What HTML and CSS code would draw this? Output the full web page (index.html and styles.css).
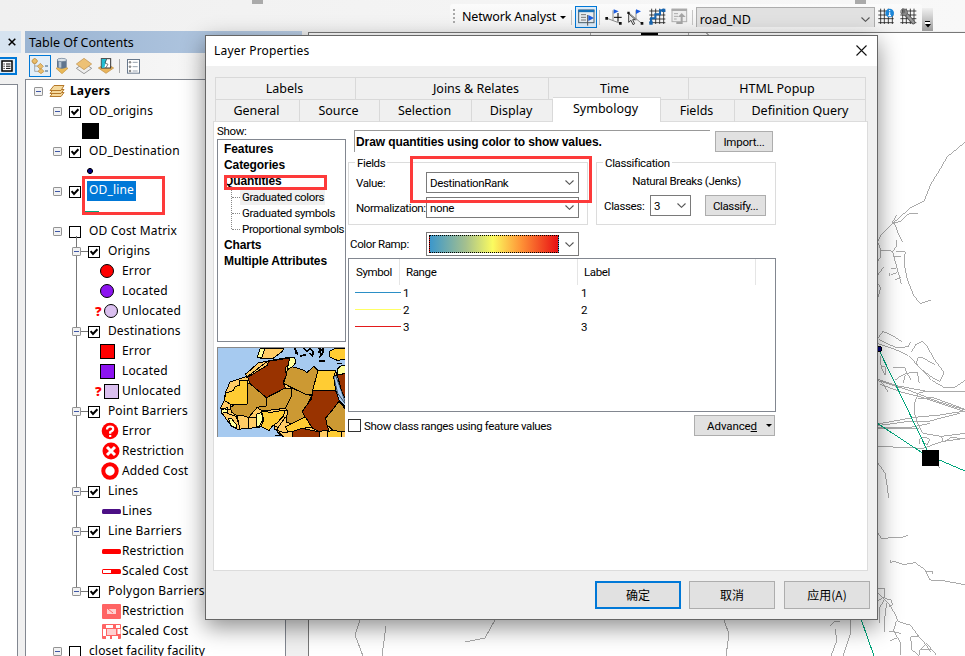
FILE: index.html
```
<!DOCTYPE html>
<html lang="en">
<head>
    <meta charset="UTF-8">
    <meta name="viewport" content="width=device-width, initial-scale=1.0">
    <title>Layer Properties</title>
    <link rel="stylesheet" href="styles.css">
</head>
<body>

    <!-- Shared symbols -->
    <svg class="defs" width="0" height="0">
        <symbol id="minus" viewBox="0 0 9 9">
            <rect x=".5" y=".5" width="8" height="8" rx=".6" fill="#f1f1f1" stroke="#929292"/>
            <path d="M2 4.5h5" stroke="#3f57a6"/>
        </symbol>
        <symbol id="box" viewBox="0 0 12 12">
            <rect x=".5" y=".5" width="11" height="11" fill="#fff" stroke="#000"/>
        </symbol>
        <symbol id="checked" viewBox="0 0 12 12">
            <rect x=".5" y=".5" width="11" height="11" fill="#fff" stroke="#000"/>
            <path d="M2.6 5.2L5 8L9.4 3.2" fill="none" stroke="#000" stroke-width="2"/>
        </symbol>
        <symbol id="chevron" viewBox="0 0 9 5">
            <path d="M.5 .5L4.5 4.3L8.500 .5" fill="none" stroke="#555" stroke-width="1.1"/>
        </symbol>
    </svg>

    <div class="app">
        <!-- Toolbar -->
        <div class="toolbar">
            <i class="stub stub-left"></i>
            <i class="stub stub-right"></i>
            <div class="network-bar">
                <span class="grip"></span>
                <span class="menu">Network Analyst</span>
                <span class="caret"></span>
                <span class="divider"></span>
                <span class="tool-active">
                    <svg width="18" height="18" viewBox="408 22 54 54">
                        <rect x="413" y="28" width="46" height="38" fill="#e9edf0" stroke="#4b5f6c" stroke-width="3"/>
                        <path d="M412 31h48" stroke="#1570b8" stroke-width="7"/>
                        <path d="M420 42h15M420 50h15M420 58h15" stroke="#777" stroke-width="3"/>
                        <path d="M440 43v32" stroke="#555" stroke-width="3"/>
                        <path d="M442 43l17 9l-17 9z" fill="#1c5de0"/>
                    </svg>
                </span>
                <span class="divider"></span>
                <svg class="tool" width="17" height="17" viewBox="494 25 51 51">
                    <path d="M500 56l40 15M518 32v30" fill="none" stroke="#777" stroke-width="2.500"/>
                    <path d="M520 29l15 6l-15 7z" fill="#1c5de0"/>
                    <path d="M533 40v26M521 53h23" stroke="#000" stroke-width="3"/>
                    <path d="M495 52h8v8h-8zM536 67h8v8h-8z" fill="#111"/>
                </svg>
                <svg class="tool" width="17" height="17" viewBox="560 25 51 51">
                    <path d="M565 39l40 33M587 32v30" fill="none" stroke="#777" stroke-width="2.500"/>
                    <path d="M587 29l15 6l-15 8z" fill="#1c5de0"/>
                    <path d="M565 42v26l7-6l6 13l5-3l-6-12h8z" fill="#eee" stroke="#222" stroke-width="2.500"/>
                    <path d="M561 36h7v7h-7zM601 67h8v8h-8z" fill="#111"/>
                </svg>
                <svg class="tool" width="17" height="17" viewBox="626 25 51 51">
                    <path d="M634 27v46M646 27v46M658 27v46M670 27v46M627 34h48M627 46h48M627 58h48M627 69h48" stroke="#222" stroke-width="2.500"/>
                    <path d="M632 70v-14h13v-12h14v-12h14" fill="none" stroke="#1765b0" stroke-width="6"/>
                    <path d="M627 65h10v10h-10zM665 27h10v10h-10z" fill="#1765b0"/>
                </svg>
                <svg class="tool" width="17" height="17" viewBox="692 25 51 51">
                    <rect x="695" y="28" width="44" height="38" fill="#eee" stroke="#b0b0b0" stroke-width="3"/>
                    <path d="M694 31h46" stroke="#aaa" stroke-width="6"/>
                    <path d="M701 42h12M701 50h12M701 58h8" stroke="#aaa" stroke-width="3"/>
                    <path d="M708 70h16v-20" fill="none" stroke="#a5a5a5" stroke-width="6"/>
                    <path d="M713 52l11-12l12 12z" fill="#a5a5a5"/>
                </svg>
                <span class="divider"></span>
                <div class="dataset">road_ND<svg width="9" height="5"><use href="#chevron"/></svg></div>
                <svg class="tool-end" width="17" height="17" viewBox="596 25 51 51">
                    <path d="M604 27v46M615 27v46M627 27v46M639 45v28M597 34h30M597 46h46M597 57h46M597 69h46" stroke="#222" stroke-width="2.500"/>
                    <circle cx="631" cy="40" r="13" fill="#1c86d8"/>
                    <path d="M631 31v4M631 38v10M627 48h8" stroke="#fff" stroke-width="3.500"/>
                </svg>
                <svg class="tool-end" width="17" height="17" viewBox="662 25 51 51">
                    <path d="M670 27v46M681 27v46M693 27v46M704 27v46M663 34h48M663 46h48M663 57h48M663 69h48" stroke="#222" stroke-width="2.500"/>
                    <path d="M675 38l27 30" stroke="#555" stroke-width="12" stroke-linecap="round"/>
                    <path d="M675 38l27 30" stroke="#999" stroke-width="7" stroke-linecap="round"/>
                    <path d="M666 31l8-1l2 8l-8 3l-4-4a13 13 0 0 0 18 10a13 13 0 0 0-2-18l-10-2z" fill="#888" stroke="#555" stroke-width="2"/>
                </svg>
            </div>
            <span class="overflow">
                <svg width="11" height="23" viewBox="0 0 11 23"><path d="M3 14.500h5" stroke="#fff" stroke-width="3"/><path d="M3 13.500h5" stroke="#000"/><path d="M3 16h6l-3 3.500z" fill="#000"/></svg>
            </span>
        </div>

        <div class="workspace">
            <!-- Docked strip -->
            <div class="dock">
                <div class="dock-title">
                    <svg width="8" height="8" viewBox="0 0 8 8"><path d="M.7 .7l6.600 6.600M7.300 .7L.7 7.300" stroke="#000" stroke-width="1.500"/></svg>
                </div>
                <div class="dock-button">
                    <svg width="12" height="12" viewBox="0 0 12 12"><rect x="1" y="1" width="10" height="10" fill="#fff" stroke="#000" stroke-width="1.500"/><path d="M2.500 4h1.200M5 4h4.500M2.500 6.200h1.200M5 6.200h4.500M2.500 8.400h1.200M5 8.400h4.500" stroke="#000"/></svg>
                </div>
                <div class="dock-list"></div>
            </div>

            <!-- Table of contents -->
            <div class="toc">
                <div class="toc-title">Table Of Contents</div>
                <div class="toc-tools">
                    <svg width="22" height="22" viewBox="87 165 66 66">
                        <rect x="88.500" y="166.500" width="63" height="63" fill="#e3eef8" stroke="#0078d7" stroke-width="3"/>
                        <path d="M104 184v30h14M104 198h16" fill="none" stroke="#888" stroke-width="2"/>
                        <g fill="#e9bd6c" stroke="#bb8a3d" stroke-width="2"><circle cx="104" cy="184" r="7"/><path d="M104 174l9 9l-9 9l-9-9zM121 190l9 9l-9 9l-9-9zM123 205l9 9l-9 7l-9-7z"/></g>
                        <path d="M135 198h9M135 213h9" stroke="#345d7d" stroke-width="3"/>
                    </svg>
                    <svg width="22" height="22" viewBox="153 165 66 66">
                        <path d="M168 205l18-8l18 8l-18 16z" fill="#e9b958" stroke="#c5923b" stroke-width="2"/>
                        <path d="M171 180v22q15 8 29 0v-22z" fill="#60758e"/>
                        <path d="M176 181v22h8v-22z" fill="#b7c5d2"/>
                        <ellipse cx="185.500" cy="180" rx="14.500" ry="5" fill="#dce4ea" stroke="#60758e" stroke-width="2"/>
                    </svg>
                    <svg width="22" height="22" viewBox="219 165 66 66">
                        <path d="M229 205l23-16l23 16l-23 16z" fill="#eee" stroke="#888" stroke-width="2.500"/>
                        <path d="M229 192l23-17l23 17l-23 17z" fill="#edc175" stroke="#bd8e48" stroke-width="2"/>
                    </svg>
                    <svg width="22" height="22" viewBox="285 165 66 66">
                        <path d="M295 204l23-14l23 14l-23 16z" fill="#e9b45c" stroke="#c08b3c" stroke-width="2"/>
                        <rect x="304" y="176" width="28" height="28" fill="#fff" stroke="#333" stroke-width="3"/>
                        <path d="M305 177h15l-7 26h-8z" fill="#22bdd2"/><path d="M320 177l-5 12l9 4l-7 11" fill="none" stroke="#333" stroke-width="2"/>
                    </svg>
                    <span class="toc-divider"></span>
                    <svg width="14" height="15" viewBox="381 176 42 45">
                        <rect x="382.500" y="177.500" width="36" height="41" fill="#fff" stroke="#69798c" stroke-width="3"/>
                        <path d="M398 186h15M398 199h15M398 212h15" stroke="#8491a0" stroke-width="2.500"/>
                        <g fill="none" stroke="#333" stroke-width="2"><circle cx="390" cy="186" r="2.500"/><circle cx="390" cy="199" r="2.500"/><circle cx="390" cy="212" r="2.500"/></g>
                    </svg>
                </div>

                <div class="tree">
                    <div class="row root">
                        <svg width="9" height="9"><use href="#minus"/></svg>
                        <svg class="stack" width="16" height="14" viewBox="0 0 16 14">
                            <g fill="#f5d99d" stroke="#b5792b"><path d="M1 12.500l3-4h11l-3 4z"/><path d="M1 9.500l3-4h11l-3 4z"/><path d="M1 6.500l4-5h10l-3 5z"/></g>
                        </svg>
                        <b>Layers</b>
                    </div>
                    <div class="row layer"><svg width="9" height="9"><use href="#minus"/></svg><svg width="12" height="12"><use href="#checked"/></svg><span>OD_origins</span></div>
                    <div class="row layer-symbol"><i class="black-square"></i></div>
                    <div class="row layer"><svg width="9" height="9"><use href="#minus"/></svg><svg width="12" height="12"><use href="#checked"/></svg><span>OD_Destination</span></div>
                    <div class="row layer-symbol"><svg class="point" width="6" height="6" viewBox="0 0 6 6"><path d="M2 0h2l2 2v2L4 6H2L0 4V2z" fill="#000"/><path d="M2 1h2l1 1v2L4 5H2L1 4V2z" fill="#00007c"/></svg></div>
                    <div class="row layer"><svg width="9" height="9"><use href="#minus"/></svg><svg width="12" height="12"><use href="#checked"/></svg><span class="selected">OD_line</span></div>
                    <div class="row layer-symbol"><i class="green-line"></i></div>
                    <div class="row layer"><svg width="9" height="9"><use href="#minus"/></svg><svg width="12" height="12"><use href="#box"/></svg><span>OD Cost Matrix</span></div>

                    <div class="group">
                        <div class="row sub"><svg width="9" height="9"><use href="#minus"/></svg><i class="branch"></i><svg width="12" height="12"><use href="#checked"/></svg><span>Origins</span></div>
                        <div class="row item"><svg width="22" height="18"><circle cx="7" cy="9" r="6.500" fill="#f00" stroke="#000"/></svg><span>Error</span></div>
                        <div class="row item"><svg width="22" height="18"><circle cx="7" cy="9" r="6.500" fill="#8c14f0" stroke="#000"/></svg><span>Located</span></div>
                        <div class="row item unlocated"><em>?</em><svg width="16" height="18"><circle cx="8" cy="9" r="6.500" fill="#dabfef" stroke="#000"/></svg><span>Unlocated</span></div>
                        <div class="row sub"><svg width="9" height="9"><use href="#minus"/></svg><i class="branch"></i><svg width="12" height="12"><use href="#checked"/></svg><span>Destinations</span></div>
                        <div class="row item"><svg width="22" height="18"><rect x=".5" y="2.500" width="14" height="14" fill="#f00" stroke="#000"/></svg><span>Error</span></div>
                        <div class="row item"><svg width="22" height="18"><rect x=".5" y="2.500" width="14" height="14" fill="#8c14f0" stroke="#000"/></svg><span>Located</span></div>
                        <div class="row item unlocated"><em>?</em><svg width="16" height="18"><rect x="1.500" y="2.500" width="14" height="14" fill="#dabfef" stroke="#000"/></svg><span>Unlocated</span></div>
                        <div class="row sub"><svg width="9" height="9"><use href="#minus"/></svg><i class="branch"></i><svg width="12" height="12"><use href="#checked"/></svg><span>Point Barriers</span></div>
                        <div class="row item"><svg width="22" height="18"><circle cx="10" cy="9" r="8.300" fill="#f00"/><path d="M7 7.500q0-3 3.200-3t3 2.600q0 1.700-3 3v1.700M10.200 13v2" fill="none" stroke="#fff" stroke-width="2.200"/></svg><span>Error</span></div>
                        <div class="row item"><svg width="22" height="18"><circle cx="11" cy="9" r="8.500" fill="#f00"/><path d="M7 5l8 8M15 5l-8 8" stroke="#fff" stroke-width="3"/></svg><span>Restriction</span></div>
                        <div class="row item"><svg width="22" height="18"><circle cx="10" cy="9" r="6.700" fill="#fff" stroke="#f00" stroke-width="4"/></svg><span>Added Cost</span></div>
                        <div class="row sub"><svg width="9" height="9"><use href="#minus"/></svg><i class="branch"></i><svg width="12" height="12"><use href="#checked"/></svg><span>Lines</span></div>
                        <div class="row item"><svg width="22" height="18"><rect x="2" y="7" width="19" height="5" rx="1.500" fill="#4c0f85"/></svg><span>Lines</span></div>
                        <div class="row sub"><svg width="9" height="9"><use href="#minus"/></svg><i class="branch"></i><svg width="12" height="12"><use href="#checked"/></svg><span>Line Barriers</span></div>
                        <div class="row item"><svg width="22" height="18"><rect x="2" y="7" width="19" height="5" rx="1.500" fill="#f00"/></svg><span>Restriction</span></div>
                        <div class="row item"><svg width="22" height="18"><rect x="2" y="7" width="19" height="5" rx="1.500" fill="#f00"/><path d="M3 9.500h8" stroke="#fff" stroke-width="3"/></svg><span>Scaled Cost</span></div>
                        <div class="row sub"><svg width="9" height="9"><use href="#minus"/></svg><i class="branch"></i><svg width="12" height="12"><use href="#checked"/></svg><span>Polygon Barriers</span></div>
                        <div class="row item"><svg width="22" height="18"><rect x="2" y="2" width="19" height="15" rx="1" fill="#ff6464"/><rect x="7" y="7" width="9" height="5" fill="#ffd0d0"/><path d="M8 7l5 4" stroke="#ff6464"/></svg><span>Restriction</span></div>
                        <div class="row item"><svg width="22" height="18"><rect x="2" y="2" width="19" height="15" rx="1" fill="#ff6464"/><rect x="7" y="7" width="9" height="6" fill="#ffd0d0"/><path d="M6 4.500h7M16 4.500h4M4.500 7v7M19 7v5M6 15.500h4M12 15.500h6" stroke="#fff" stroke-width="3"/></svg><span>Scaled Cost</span></div>
                    </div>
                    <div class="row layer"><svg width="9" height="9"><use href="#minus"/></svg><svg width="12" height="12"><use href="#box"/></svg><span>closet facility facility</span></div>
                </div>
            </div>

            <!-- Map -->
            <div class="map">
                <svg width="657" height="623" viewBox="308 33 657 623" shape-rendering="crispEdges">
                    <g fill="none" stroke="#aaa" stroke-width="3">
                        <g transform="translate(860 30) scale(.3333)">
                            <path d="M315 337L262 380L240 418L213 462L193 512L152 533L103 576L61 618L53 635L61 656V682L53 694M97 578L109 556M98 580L120 575L148 550H174M103 580L117 615L128 637M61 661H90L98 666L109 648V630M98 664L103 685L124 762M108 666H136L132 695L140 742L160 795L181 821L213 810M101 681H122M90 728V739M92 735L112 728M94 715H108M105 750L124 741M53 735L72 711M53 760L62 774L53 805"/>
                        </g>
                        <g transform="translate(860 330) scale(.3333)">
                            <path d="M53 26L69 4L100 18L125 35M58 29L110 54L145 50L151 37M55 41L105 58L145 77L185 118L215 151L254 173L285 172L315 152M154 66L168 43L188 34L201 48L221 85L252 127L240 154L218 143L185 119L169 101L174 83L190 84L224 104M60 78L64 113L75 136M66 110H76V135M64 156L85 187M99 112H134L142 131L154 151M104 151L120 140L140 130L172 126L178 160M136 134L130 158M55 148L115 168L205 185H315M55 152L150 182L235 215L315 240M60 163L130 188L180 200L315 245M163 249V220L175 190L200 183M175 207L220 203L315 238M53 282L120 270L163 262L240 255L315 243M53 287L140 275L205 274L300 250M53 292H150L210 280M53 297H176M163 249L173 281L188 310L244 319L315 310M53 349L190 355L245 335L315 325M180 342L178 331L184 323H201L209 330L202 344L190 338M244 319L250 336L275 322L300 325M197 352L205 365L226 370L238 415M53 398L75 429L81 465L86 505M53 607L64 625L125 622L144 616M92 690V698L103 694L130 704L165 698L194 718L210 750L249 752L315 764M198 724H218V731M53 775H73V804M54 788L87 822L104 850L115 875L152 886L176 920L197 943L212 965M58 879V835L75 806L94 810L97 824L87 830M74 905V865L80 820M53 812L75 800M109 873L101 902L122 940V976M88 904L109 907L122 910M90 932L112 924M152 920L176 918M152 922L156 960L176 976M180 976V960L200 940L230 976M196 944L181 960H212"/>
                        </g>
                        <g stroke-width="1"><path d="M724 620L729 634L726 656M830 626l4-4 6-1M835 629l2 11-6 16M850 620v15l-7 21M360 620l-5 15 8 21M386 626l-4 30M495 620l-10 18-20 4M590 31v5M688 30v6M705 32l5 4"/></g>
                    </g>
                    <g fill="none" stroke="#00a57b" stroke-width="1">
                        <path d="M879 350L930 456L965 471M877 423L930 458M861 619L874 656"/>
                    </g>
                    <circle cx="878.500" cy="349" r="3" fill="#00007c" stroke="#000"/>
                    <rect x="922" y="450" width="17" height="16" fill="#000"/>
                    <rect x="641" y="33" width="17" height="3" fill="#000"/>
                </svg>
            </div>
        </div>

        <!-- Layer Properties dialog -->
        <div class="dialog">
            <div class="dialog-title">
                <span>Layer Properties</span>
                <svg width="11" height="11" viewBox="0 0 11 11"><path d="M.5 .5l10 10M10.500 .5l-10 10" stroke="#111" stroke-width="1.100"/></svg>
            </div>
            <div class="dialog-body">
                <div class="tabs tabs-back">
                    <span>Labels</span><span>Joins &amp; Relates</span><span>Time</span><span>HTML Popup</span>
                </div>
                <div class="tabs tabs-front">
                    <span>General</span><span>Source</span><span>Selection</span><span>Display</span><span class="active">Symbology</span><span>Fields</span><span>Definition Query</span>
                </div>

                <div class="page">
                    <div class="show">
                        <label>Show:</label>
                        <div class="show-list">
                            <b>Features</b>
                            <b>Categories</b>
                            <b>Quantities</b>
                            <div class="kinds">
                                <span class="current">Graduated colors</span>
                                <span>Graduated symbols</span>
                                <span>Proportional symbols</span>
                            </div>
                            <b>Charts</b>
                            <b>Multiple Attributes</b>
                        </div>
                        <svg class="preview" width="128" height="90" viewBox="36 51 384 270" shape-rendering="crispEdges">
                            <rect x="36" y="51" width="387" height="270" fill="#a6caf0"/>
                            <g stroke="#000" stroke-width="3" stroke-linejoin="round">
                                <path d="M61 189L75 156L122 140L133 122L160 99L188 93L240 84L268 81L273 96L262 110L298 121L305 128L327 109L339 121L392 122L396 135L386 140L392 181L402 212L422 232V321H238L209 297L210 278L160 292L140 294L98 298L78 287L50 248L47 232L58 212Z" fill="#fc6"/>
                                <path d="M157 82L172 54H236L232 64L206 84L180 87Z" fill="#fc6"/>
                                <path d="M157 82L165 56L180 54L170 84Z" fill="#ff9"/>
                                <path d="M268 54L278 72L270 67M286 78L304 74M296 54L306 64L314 56L325 65L322 78L314 70M339 54L350 60L341 66L351 72L342 82M343 93H361M354 54V70" fill="none" stroke-width="5"/>
                                <path d="M372 64L390 56H423V88L397 91L372 80Z" fill="#fc3"/>
                                <path d="M397 99H410M399 115L411 105L423 107V134H398Z" fill="#ff9"/>
                                <path d="M397 135L423 130V208L410 185Z" fill="#930"/>
                                <path d="M133 123L160 99L188 93L125 142L122 132Z" fill="#fc6"/>
                                <path d="M128 142L188 105L190 94L255 84L250 105L241 112L244 135L234 155L241 174L184 203L134 160Z" fill="#930"/>
                                <path d="M254 84L268 81L273 96L261 113L247 119Z" fill="#ff9"/>
                                <path d="M247 119L262 110L298 121L305 128L327 109L339 121L323 195L302 193L258 172L236 160L244 135Z" fill="#c93"/>
                                <path d="M339 121L392 122L386 140L392 181H323Z" fill="#fc3"/>
                                <path d="M61 189L85 182L90 170L103 166V150H128V222H76L59 212Z" fill="#fc3"/>
                                <path d="M128 160L134 160L184 203V228L155 234L130 263L115 257L97 258L80 247L76 232L90 223H126Z" fill="#c93"/>
                                <path d="M184 203L241 174H258L260 196L241 235L172 243L155 232L184 228Z" fill="#c93"/>
                                <path d="M258 172L302 193L320 197L305 226L292 244L301 260L265 281L244 278L247 243L241 235L260 196Z" fill="#c93"/>
                                <path d="M323 182H392L404 214L384 238L365 264L370 301L340 304L312 288L292 244L305 226L320 206Z" fill="#930"/>
                                <path d="M402 214L422 238V305L387 303L366 285L362 264L384 238Z" fill="#c93"/>
                                <path d="M170 244L198 247L241 240L235 258L218 277L202 288L192 302L168 289L176 270Z" fill="#fc3"/>
                                <path d="M241 290L301 261L320 291L292 295L275 305L249 306Z" fill="#fc3"/>
                                <path d="M261 305L292 295L344 306V321H261Z" fill="#930"/>
                                <path d="M366 305L387 301L408 306L411 321H366Z" fill="#fc3"/>
                                <path d="M50 241L66 232L68 246L50 250ZM70 265L80 266L94 284L95 296L78 286Z" fill="#ff9"/>
                                <path d="M155 252L170 248L174 270L162 290H154Z" fill="#ff9"/>
                                <path d="M58 212L76 222L75 240L48 235M65 250L95 260L97 275M96 258L105 298M131 263V293M131 263H154M204 287L216 290L218 308L237 321M242 260L214 300L230 306L249 306M210 316H232M130 263L155 234" fill="none"/>
                                <path d="M392 137L386 140L398 190L423 224L410 185Z" fill="#a6caf0" stroke-width="2"/>
                            </g>
                            <path d="M37.500 321V52.500H423" fill="none" stroke="#888" stroke-width="3"/>
                        </svg>
                    </div>

                    <div class="settings">
                        <div class="heading-row">
                            <h1>Draw quantities using color to show values.</h1>
                            <button class="import">Import...</button>
                        </div>
                        <div class="groups">
                            <div class="box fields">
                                <span class="legend">Fields</span>
                                <div class="field"><label>Value:</label><div class="select">DestinationRank<svg width="9" height="5"><use href="#chevron"/></svg></div></div>
                                <div class="field"><label>Normalization:</label><div class="select">none<svg width="9" height="5"><use href="#chevron"/></svg></div></div>
                            </div>
                            <div class="box classification">
                                <span class="legend">Classification</span>
                                <p>Natural Breaks (Jenks)</p>
                                <div class="classes"><label>Classes:</label><div class="select">3<svg width="9" height="5"><use href="#chevron"/></svg></div><button>Classify...</button></div>
                            </div>
                        </div>
                        <div class="ramp-row">
                            <label>Color Ramp:</label>
                            <div class="select"><i class="ramp"></i><svg width="9" height="5"><use href="#chevron"/></svg></div>
                        </div>
                        <div class="table">
                            <div class="thead"><span>Symbol</span><span>Range</span><span>Label</span></div>
                            <div class="tr"><i class="line blue"></i><span>1</span><span>1</span></div>
                            <div class="tr"><i class="line yellow"></i><span>2</span><span>2</span></div>
                            <div class="tr"><i class="line red"></i><span>3</span><span>3</span></div>
                        </div>
                        <div class="bottom-row">
                            <i class="check"></i>
                            <label>Show class ranges using feature values</label>
                            <button>Advance<u>d</u><span class="caret"></span></button>
                        </div>
                    </div>
                </div>

                <div class="actions">
                    <button class="default">确定</button>
                    <button>取消</button>
                    <button class="apply">应用(A)</button>
                </div>
            </div>
        </div>

        <!-- Red highlight frames -->
        <div class="mark mark-layer"></div>
        <div class="mark mark-quantities"></div>
        <div class="mark mark-value"></div>
    </div>

</body>
</html>
```

FILE: styles.css
```
* {
    box-sizing: border-box;
}

body {
    margin: 0;
    background: #f0f0f0;
    font-family: "Noto Sans", "Noto Sans CJK SC", sans-serif;
    font-size: 12.5px;
    color: #000;
}

svg {
    display: block;
    flex: none;
}

.defs {
    position: absolute;
}

.app {
    position: relative;
    display: flex;
    flex-direction: column;
    width: 965px;
    height: 656px;
    overflow: hidden;
    white-space: nowrap;
}

/* toolbar */
.toolbar {
    position: relative;
    display: flex;
    height: 31px;
    padding-left: 450px;
    background: linear-gradient(90deg, #f0f0f0, #f8f8f8);
}

.stub {
    position: absolute;
    top: 0;
    width: 11px;
    height: 4px;
    background: #aaa;
}

.stub-left {
    left: 252px;
}

.stub-right {
    left: 855px;
}

.network-bar {
    display: flex;
    align-items: flex-start;
    width: 472px;
    height: 27px;
    margin-top: 4px;
    background: linear-gradient(#fbfbfb, #f3f3f3);
    border-radius: 3px;
}

.grip {
    width: 2px;
    height: 15px;
    margin: 5px 7px 0 3px;
    background: repeating-linear-gradient(#aaa 0 2px, transparent 2px 4px);
}

.menu {
    width: 97px;
    line-height: 26px;
    letter-spacing: -0.15px;
}

.caret {
    border: 3px solid transparent;
    border-top-color: #000;
    border-bottom: 0;
}

.network-bar .caret {
    margin: 12px 5px 0 1px;
}

.divider {
    width: 1px;
    height: 15px;
    margin-top: 6px;
    background: #c4c4c4;
}

.tool-active {
    width: 22px;
    height: 22px;
    margin: 2px 2px 0 3px;
    padding: 1px;
    border: 1px solid #0078d7;
    background: #dcebf8;
}

.tool {
    margin: 4px 0 0 5px;
}

.tool + .divider {
    margin-left: 4px;
}

.dataset {
    display: flex;
    justify-content: space-between;
    align-items: center;
    width: 180px;
    height: 20px;
    margin: 3px 3px 0 3px;
    padding: 3px 4px 0 3px;
    border: 1px solid #adadad;
    border-bottom: 0;
    background: #e1e1e1;
}

.tool-end {
    margin: 4px 5px 0 0;
}

.overflow {
    width: 11px;
    height: 23px;
    margin-top: 8px;
    background: linear-gradient(#f0f0f0, #9c9c9c);
}

/* workspace */
.workspace {
    display: flex;
    flex: 1;
    min-height: 0;
}

.dock {
    width: 25px;
}

.dock-title {
    display: flex;
    align-items: center;
    justify-content: flex-end;
    width: 21px;
    height: 22px;
    padding-right: 5px;
    background: #d6e3f0;
}

.dock-button {
    display: flex;
    align-items: center;
    justify-content: flex-end;
    width: 17px;
    height: 18px;
    margin: 4px 0 9px;
    padding-right: 2px;
    border: 2px solid #0078d7;
    border-left: 0;
    background: #dfecf7;
}

.dock-list {
    width: 18px;
    height: 580px;
    border: 1px solid #828790;
    border-left: 0;
    background: #fff;
}

.toc {
    width: 278px;
    margin-right: 6px;
}

.toc-title {
    height: 22px;
    padding-left: 4px;
    background: linear-gradient(90deg, #9ab4d2, #b9cde5);
    line-height: 23px;
    letter-spacing: 0.02px;
}

.toc-tools {
    display: flex;
    align-items: center;
    height: 26px;
    padding-left: 4px;
    background: linear-gradient(90deg, #f0f0f0, #fafafa);
}

.toc-divider {
    width: 1px;
    height: 14px;
    margin: 0 7px 0 2px;
    background: #aaa;
}

.tree {
    width: 261px;
    height: 600px;
    padding-top: 1px;
    border: 1px solid #828790;
    background: #fff;
}

.row {
    display: flex;
    align-items: center;
    height: 20px;
    font-size: 12px;
    letter-spacing: 0.18px;
}

.row span,
.row b {
    margin-bottom: 2px;
}

.root {
    padding-left: 8px;
}

.stack {
    margin: 0 5px 0 6px;
}

.layer {
    padding-left: 27px;
}

.layer svg + svg {
    margin: 1px 8px 0 7px;
}

.row .selected {
    height: 20px;
    margin: 0 0 0 -2px;
    padding: 0 2px;
    background: #0078d7;
    color: #fff;
    line-height: 18px;
}

.layer-symbol {
    padding-left: 56px;
}

.black-square {
    width: 17px;
    height: 16px;
    background: #000;
}

.point {
    margin-left: 5px;
}

.green-line {
    width: 14px;
    height: 1px;
    margin-left: 3px;
    background: #00a57b;
}

.group {
    position: relative;
}

.group::before {
    content: "";
    position: absolute;
    top: -5px;
    left: 50px;
    width: 1px;
    height: 360px;
    background: #777;
}

.sub {
    position: relative;
    padding-left: 46px;
}

.branch {
    width: 7px;
    height: 1px;
    background: #777;
}

.sub svg + .branch + svg {
    margin: 1px 8px 0 0;
}

.item {
    padding-left: 74px;
}

.unlocated {
    padding-left: 69px;
}

.unlocated em {
    width: 8px;
    margin-right: 3px;
    color: #f00;
    font-size: 13px;
    font-style: normal;
    font-weight: 900;
}

.unlocated svg {
    margin-left: -3px;
    margin-right: 3px;
}

.map {
    flex: 1;
    height: 624px;
    margin-top: 1px;
    border-top: 1px solid #777;
    border-left: 1px solid #777;
    background: #fff;
}

.map svg {
    margin-left: -1px;
}

/* dialog */
.dialog {
    position: absolute;
    top: 35px;
    left: 205px;
    width: 673px;
    height: 585px;
    border: 1px solid #666;
    background: #f0f0f0;
    box-shadow: 0 7px 22px rgba(0, 0, 0, 0.45);
}

.dialog-title {
    display: flex;
    align-items: center;
    justify-content: space-between;
    height: 30px;
    padding: 0 10px 2px 8px;
    background: #fff;
    font-size: 12px;
    letter-spacing: 0.2px;
}

.dialog-body {
    padding: 11px 7px 0;
}

.tabs {
    display: grid;
    height: 22px;
    margin: 0 4px 0 2px;
    border-top: 1px solid #d9d9d9;
    border-left: 1px solid #d9d9d9;
    line-height: 21px;
    text-align: center;
}

.tabs span {
    padding-right: 2px;
    border-right: 1px solid #d9d9d9;
}

.tabs-back {
    grid-template-columns: 140px 193px 140px 177px;
}

.tabs-back span:nth-child(2) {
    padding-left: 50px;
}

.tabs-back span:nth-child(3) {
    padding-right: 8px;
}

.tabs-back span:nth-child(4) {
    padding-right: 0;
}

.tabs-front {
    grid-template-columns: 84px 80px 92px 81px 108px 74px 131px;
}

.tabs-front .active {
    z-index: 1;
    height: 25px;
    margin-top: -3px;
    border-top: 1px solid #d9d9d9;
    background: #fff;
}

.tabs-front span:last-child {
    padding-right: 0;
}

.page {
    display: flex;
    gap: 2px;
    width: 655px;
    height: 450px;
    padding-left: 3px;
    border: 1px solid #dcdcdc;
    background: #fff;
    font-family: Roboto, "Liberation Sans", sans-serif;
    font-size: 11.5px;
    letter-spacing: -0.36px;
}

.show {
    width: 129px;
}

.show label {
    display: block;
    height: 17px;
    line-height: 18px;
}

.show-list {
    display: flex;
    flex-direction: column;
    height: 203px;
    margin-bottom: 5px;
    padding: 1px 0 0 6px;
    border: 1px solid #828790;
    line-height: 16px;
}

.show-list b,
h1 {
    font-family: "Liberation Sans", sans-serif;
    font-size: 12px;
    letter-spacing: -0.1px;
}

.kinds {
    display: flex;
    flex-direction: column;
    position: relative;
    padding-left: 16px;
}

.kinds::before {
    content: "";
    position: absolute;
    top: 0;
    left: 7px;
    width: 1px;
    height: 40px;
    border-left: 1px dotted #888;
}

.kinds span {
    position: relative;
    width: 85px;
    height: 16px;
    padding-left: 2px;
}

.kinds span::before {
    content: "";
    position: absolute;
    top: 8px;
    left: -8px;
    width: 8px;
    border-top: 1px dotted #888;
}

.kinds .current {
    background: #f0f0f0;
}

.settings {
    width: 428px;
    padding-top: 8px;
}

.heading-row {
    display: flex;
    justify-content: space-between;
    padding: 0 3px 0 6px;
}

h1 {
    width: 356px;
    height: 22px;
    margin: 0;
    padding-left: 1px;
    border-top: 1px solid #999;
    border-left: 1px solid #999;
    line-height: 23px;
}

button {
    height: 21px;
    padding: 0;
    border: 1px solid #adadad;
    background: #e1e1e1;
    color: #000;
    font: inherit;
    letter-spacing: inherit;
}

.import {
    width: 58px;
    margin-top: 1px;
    letter-spacing: -0.25px;
}

.groups {
    display: flex;
    gap: 8px;
    margin-top: 10px;
}

.box {
    position: relative;
    height: 63px;
    border: 1px solid #dcdcdc;
}

.legend {
    position: absolute;
    top: -8px;
    left: 6px;
    padding: 0 2px;
    background: #fff;
    line-height: 16px;
}

.fields {
    width: 240px;
    padding: 9px 8px 0 7px;
}

.field {
    display: flex;
    align-items: center;
    height: 21px;
    margin-bottom: 4px;
}

.field label {
    flex: none;
    width: 70px;
}

.select {
    display: flex;
    align-items: center;
    justify-content: space-between;
    width: 153px;
    height: 21px;
    padding: 0 4px 0 3px;
    border: 1px solid #7a7a7a;
    background: #fff;
}

.classification {
    width: 180px;
    padding: 0 9px 0 7px;
}

.classification p {
    margin: 10px 0 6px;
    padding-left: 3px;
    line-height: 16px;
    text-align: center;
}

.classes {
    display: flex;
    align-items: center;
}

.classes label {
    width: 46px;
}

.classes .select {
    width: 41px;
    margin-right: 14px;
}

.classes button {
    width: 61px;
}

.ramp-row {
    display: flex;
    align-items: center;
    height: 24px;
    margin: 7px 0 2px;
    padding-left: 2px;
}

.ramp-row label {
    width: 76px;
}

.ramp-row .select {
    height: 24px;
    padding-left: 2px;
}

.ramp {
    width: 130px;
    height: 18px;
    border: 1px dotted #000;
    background: linear-gradient(90deg, #3c97cb, #a5c08e 28%, #fbfb5f 49%, #fe8f35 72%, #e80f14);
}

.table {
    height: 154px;
    border: 1px solid #828790;
}

.thead {
    display: grid;
    grid-template-columns: 51px 178px 178px;
    height: 25px;
    line-height: 26px;
}

.thead span {
    border-right: 1px solid #e5e5e5;
    padding-left: 6px;
}

.thead span:first-child {
    padding-left: 7px;
}

.tr {
    display: grid;
    grid-template-columns: 48px 178px 1fr;
    align-items: center;
    height: 17px;
    padding-left: 6px;
}

.line {
    width: 46px;
    height: 1px;
}

.blue {
    background: #2b8fc6;
}

.yellow {
    background: #ffff64;
}

.red {
    background: #e31a1c;
}

.bottom-row {
    display: flex;
    align-items: center;
    height: 21px;
    margin-top: 3px;
}

.check {
    width: 13px;
    height: 13px;
    margin-right: 3px;
    border: 1px solid #333;
}

.bottom-row button {
    display: flex;
    align-items: center;
    justify-content: flex-end;
    width: 81px;
    margin-left: auto;
    margin-right: 1px;
    padding-right: 2px;
    letter-spacing: -0.1px;
}

.bottom-row .caret {
    margin-left: 9px;
}

.actions {
    display: flex;
    justify-content: flex-end;
    gap: 8px;
    padding-top: 10px;
}

.actions button {
    width: 86px;
    height: 28px;
    padding-bottom: 2px;
    font-family: "Noto Sans CJK SC", sans-serif;
    font-size: 12px;
}

.actions .default {
    border: 2px solid #0078d7;
}

.actions .apply {
    margin-left: 1px;
}

/* highlight frames */
.mark {
    position: absolute;
    border: 3px solid #fd3a3a;
}

.mark-layer {
    top: 176px;
    left: 82px;
    width: 83px;
    height: 39px;
}

.mark-quantities {
    top: 175px;
    left: 224px;
    width: 103px;
    height: 15px;
}

.mark-value {
    top: 156px;
    left: 410px;
    width: 182px;
    height: 47px;
}
```
